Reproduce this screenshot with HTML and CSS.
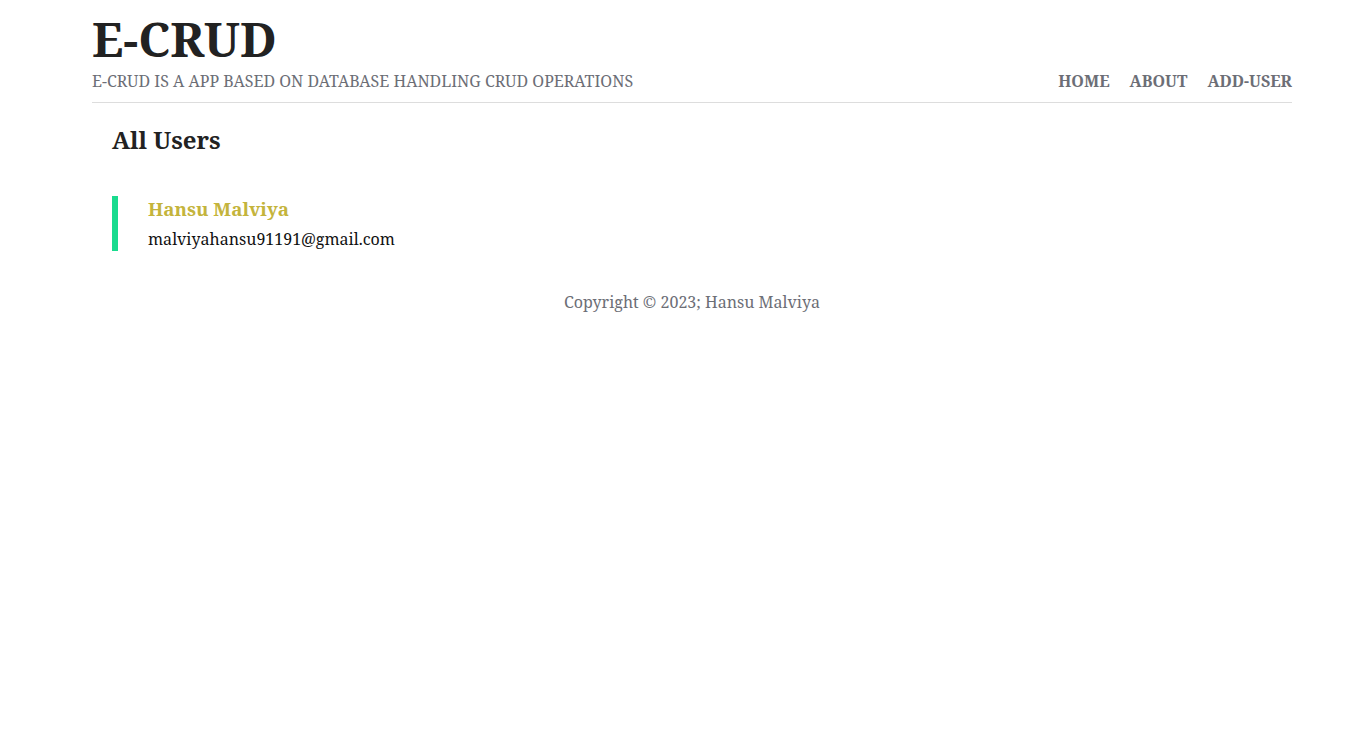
FILE: index.html
```html
<!DOCTYPE html>
<html lang="en">
<head>
<meta charset="utf-8">
<title>E-CRUD</title>
<link rel="stylesheet" href="styles.css">
</head>
<body>
<div class="container">
  <header class="header">
    <h1 class="brand">E-CRUD</h1>
    <div class="header-row">
      <p class="tagline">E-CRUD IS A APP BASED ON DATABASE HANDLING CRUD OPERATIONS</p>
      <nav class="nav">
        <a href="#" class="nav-link">HOME</a>
        <a href="#" class="nav-link">ABOUT</a>
        <a href="#" class="nav-link">ADD-USER</a>
      </nav>
    </div>
  </header>
  <main class="main">
    <h2 class="section-title">All Users</h2>
    <div class="user-card">
      <h3 class="user-name">Hansu Malviya</h3>
      <p class="user-email">malviyahansu91191@gmail.com</p>
    </div>
  </main>
  <footer class="footer">Copyright © 2023; Hansu Malviya</footer>
</div>
</body>
</html>
```
FILE: styles.css
```css
* { box-sizing: border-box; }
body {
  margin: 0;
  font-family: "Noto Serif", "Droid Serif", "DejaVu Serif", serif;
  color: #222;
  background: #fff;
}
.container {
  width: 1200px;
  margin-left: 92px;
}
.header {
  border-bottom: 1px solid #ddd;
  padding-top: 10px;
}
.brand {
  margin: 0;
  font-size: 48px;
  line-height: 58px;
  font-weight: 700;
  color: #222;
}
.header-row {
  display: flex;
  justify-content: space-between;
  align-items: center;
  height: 34px;
  padding-bottom: 8px;
}
.tagline {
  margin: 0;
  font-size: 16px;
  color: #6c6e76;
}
.nav {
  display: flex;
  gap: 20px;
}
.nav-link {
  font-size: 16px;
  font-weight: 700;
  color: #6c6e76;
  text-decoration: none;
}
.main {
  padding: 0 20px;
}
.section-title {
  margin: 21px 0 0;
  font-size: 24px;
  line-height: 32px;
}
.user-card {
  margin-top: 40px;
  border-left: 6px solid #19db8e;
  padding-left: 30px;
}
.user-name {
  margin: 0 0 6px;
  font-size: 18.72px;
  line-height: 25px;
  color: #c4b43c;
}
.user-email {
  margin: 0;
  font-size: 16px;
  line-height: 24px;
  color: #111;
}
.footer {
  text-align: center;
  color: #6c6e76;
  font-size: 16px;
  line-height: 24px;
  margin-top: 39px;
}
```
